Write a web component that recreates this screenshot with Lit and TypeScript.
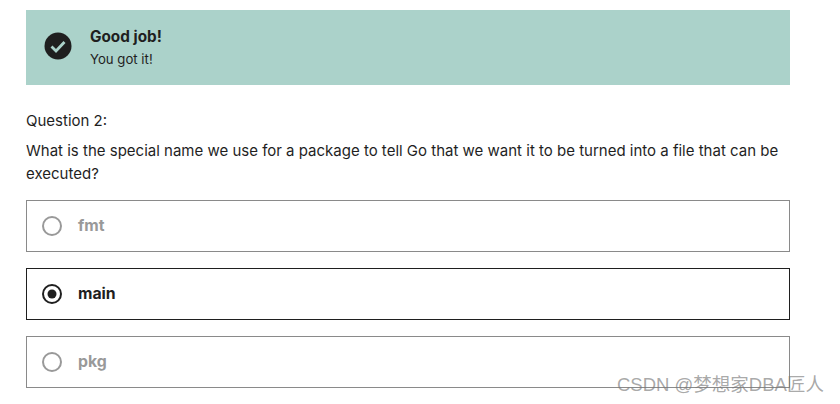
import { LitElement, html, svg, css } from "lit";
import { customElement } from "lit/decorators.js";

@customElement("app-root")
export class AppRoot extends LitElement {
  static styles = css`
    :host {
      display: block;
      position: relative;
      width: 840px;
      height: 404px;
      overflow: hidden;
      background: #fff;
      font-family: "Inter", "Liberation Sans", sans-serif;
      color: #1f1f1f;
      box-sizing: border-box;
    }
    .page {
      display: flex;
      flex-direction: column;
      width: 764px;
      padding: 10px 0 0 26px;
    }
    .banner {
      display: flex;
      align-items: center;
      gap: 18px;
      height: 75px;
      padding-left: 18px;
      background: #abd2ca;
      box-sizing: border-box;
    }
    .banner svg { width: 28px; height: 28px; flex: none; margin-top: -3px; }
    .banner-text { display: flex; flex-direction: column; gap: 3px; margin-top: -1px; }
    .title { font-size: 15.3px; font-weight: 700; line-height: 20px; }
    .sub { font-size: 13.2px; line-height: 18px; }
    .label { margin-top: 25px; font-size: 15px; line-height: 21px; }
    .question { margin-top: 8px; font-size: 15px; line-height: 23px; }
    .options { display: flex; flex-direction: column; gap: 16px; margin-top: 15px; }
    .option {
      display: flex;
      align-items: center;
      gap: 16px;
      height: 52px;
      padding-left: 15px;
      border: 1px solid #8a8a8a;
      box-sizing: border-box;
      font-size: 15.8px;
      font-weight: 700;
      color: #999;
    }
    .option span { margin-top: -2px; }
    .option.selected { border-color: #1f1f1f; color: #1f1f1f; }
    .option svg { width: 20px; height: 20px; flex: none; }
    .mark {
      position: absolute;
      left: 617px;
      top: 373px;
      font-family: "Liberation Sans", "Noto Sans CJK SC", sans-serif;
      font-size: 18.5px;
      line-height: 24px;
      color: rgba(120, 120, 120, 0.65);
      white-space: nowrap;
    }
  `;

  private radio(selected: boolean) {
    const c = selected ? "#1f1f1f" : "#999";
    return html`<svg viewBox="0 0 20 20">
      <circle cx="10" cy="10" r="9" fill="none" stroke=${c} stroke-width="2"></circle>
      ${selected ? svg`<circle cx="10" cy="10" r="4.5" fill=${c}></circle>` : null}
    </svg>`;
  }

  render() {
    const options = [
      { text: "fmt", selected: false },
      { text: "main", selected: true },
      { text: "pkg", selected: false },
    ];
    return html`
      <div class="page">
        <div class="banner">
          <svg viewBox="0 0 28 28">
            <circle cx="14" cy="14" r="13.5" fill="#1f1f1f"></circle>
            <path d="M7.5 14.5l4.5 4.5L20.5 10" fill="none" stroke="#abd2ca" stroke-width="2.8"></path>
          </svg>
          <div class="banner-text">
            <div class="title">Good job!</div>
            <div class="sub">You got it!</div>
          </div>
        </div>
        <div class="label">Question 2:</div>
        <div class="question">
          What is the special name we use for a package to tell Go that we want it to be turned into a file that can be executed?
        </div>
        <div class="options">
          ${options.map(
            (o) => html`<div class="option ${o.selected ? "selected" : ""}">
              ${this.radio(o.selected)}<span>${o.text}</span>
            </div>`
          )}
        </div>
      </div>
      <div class="mark">CSDN @梦想家DBA匠人</div>
    `;
  }
}
